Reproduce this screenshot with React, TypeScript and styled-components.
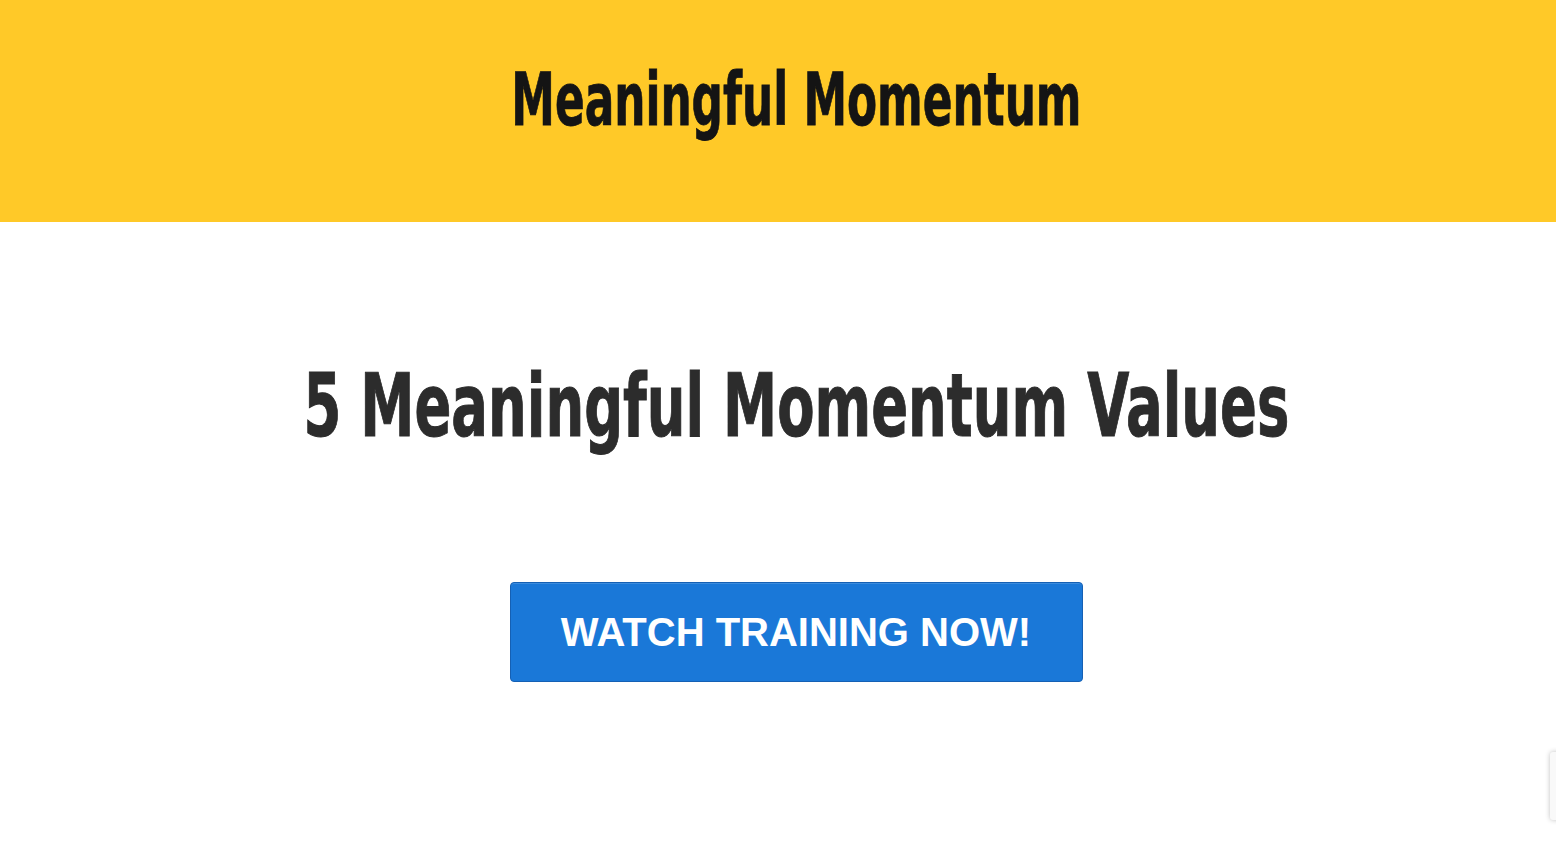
import React from 'react';
import styled, { createGlobalStyle } from 'styled-components';

const GlobalStyle = createGlobalStyle`
  html, body {
    margin: 0;
    padding: 0;
    background: #ffffff;
  }
  body {
    font-family: 'Liberation Sans', Arial, sans-serif;
    overflow: hidden;
  }
`;

const Page = styled.div`
  width: 100%;
  min-height: 844px;
  position: relative;
  overflow: hidden;
`;

const Header = styled.header`
  height: 222px;
  box-sizing: border-box;
  padding: 0 0 24px 36px;
  background-color: #ffc928;
  display: flex;
  align-items: center;
  justify-content: center;
`;

// condensed display face, squeezed horizontally to get the narrow look
const Condensed = styled.h1<{ size: number; squeeze: number; stroke: number; color: string }>`
  margin: 0;
  display: inline-block;
  font-family: 'Liberation Sans Narrow', 'DejaVu Sans Condensed', sans-serif;
  font-weight: 700;
  font-size: ${({ size }) => size}px;
  line-height: 1;
  color: ${({ color }) => color};
  -webkit-text-stroke: ${({ stroke, color }) => `${stroke}px ${color}`};
  transform: scaleX(${({ squeeze }) => squeeze});
  white-space: nowrap;
`;

const Main = styled.main`
  display: flex;
  flex-direction: column;
  align-items: center;
  padding: 140px 0 0 36px;
`;

const Button = styled.a`
  margin-top: 132px;
  width: 573px;
  height: 100px;
  box-sizing: border-box;
  display: flex;
  align-items: center;
  justify-content: center;
  background-color: #1a78d8;
  border: 1px solid #1560b4;
  border-radius: 4px;
  box-shadow: inset 0 1px 0 rgba(255, 255, 255, 0.15);
  color: #ffffff;
  font-family: 'Liberation Sans', Arial, sans-serif;
  font-weight: 700;
  font-size: 40px;
  text-decoration: none;
  cursor: pointer;
`;

// recaptcha badge tucked off the right edge
const Badge = styled.div`
  position: absolute;
  right: -250px;
  top: 752px;
  width: 256px;
  height: 68px;
  border-radius: 3px;
  background: #f9f9f9;
  box-shadow: 0 0 5px rgba(0, 0, 0, 0.25);
`;

export default function App() {
  return (
    <Page>
      <GlobalStyle />
      <Header>
        <Condensed size={73} squeeze={0.667} stroke={0.8} color="#141414">
          Meaningful Momentum
        </Condensed>
      </Header>
      <Main>
        <Condensed as="h2" size={88} squeeze={0.687} stroke={1} color="#2c2c2c">
          5 Meaningful Momentum Values
        </Condensed>
        <Button href="#">WATCH TRAINING NOW!</Button>
      </Main>
      <Badge />
    </Page>
  );
}
